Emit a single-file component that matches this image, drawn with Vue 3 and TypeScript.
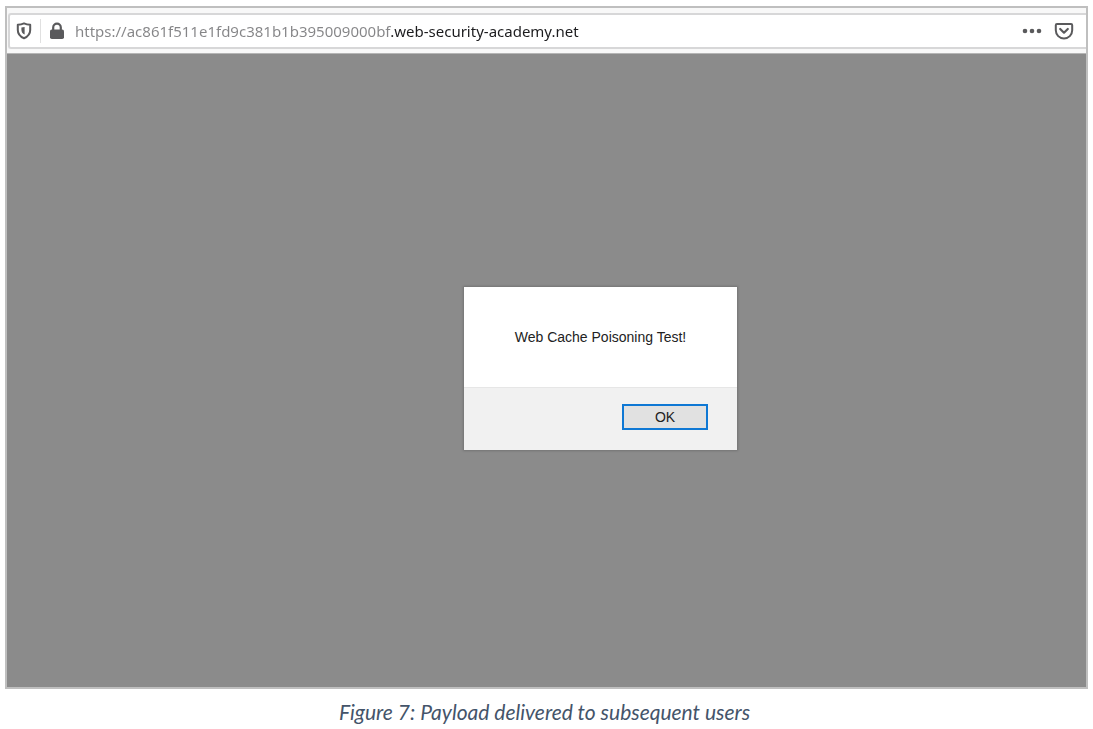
<script setup lang="ts">
import { ref } from 'vue'

const address = ref('https://ac861f511e1fd9c381b1b395009000bf.web-security-academy.net')
const message = 'Web Cache Poisoning Test!'
const open = ref(true)
</script>

<template>
  <figure class="figure">
    <div class="browser">
      <header class="toolbar">
        <div class="urlbar">
          <button class="icon shield" type="button" aria-label="Tracking protection">
            <svg width="16" height="18" viewBox="0 0 16 18">
              <path d="M8 1.4C10 2.300 12 2.700 14.200 2.800V8c0 4-2.400 6.700-6.200 8.200C4.200 14.700 1.800 12 1.800 8V2.800C4 2.700 6 2.300 8 1.400Z" fill="none" stroke="#5a5a5c" stroke-width="2" stroke-linejoin="round" />
              <path d="M8.600 4.900v7.600C6.500 11.700 5.400 9.900 5.400 7.700V5.400Z" fill="#5a5a5c" />
            </svg>
          </button>
          <span class="divider"></span>
          <button class="icon lock" type="button" aria-label="Connection secure">
            <svg width="16" height="18" viewBox="0 0 16 18">
              <path d="M4.200 9V5.400a3.800 3.800 0 0 1 7.600 0V9" fill="none" stroke="#5a5a5c" stroke-width="2.200" />
              <rect x="1" y="7.500" width="14" height="9.500" rx="1.800" fill="#5a5a5c" />
            </svg>
          </button>
          <input v-model="address" class="address" type="text" aria-label="Address" spellcheck="false" />
          <button class="icon more" type="button" aria-label="Page actions">
            <svg width="20" height="18" viewBox="0 0 20 18" fill="#5a5a5c">
              <circle cx="3" cy="9" r="2.300" />
              <circle cx="10" cy="9" r="2.300" />
              <circle cx="17" cy="9" r="2.300" />
            </svg>
          </button>
          <button class="icon pocket" type="button" aria-label="Save to Pocket">
            <svg width="20" height="18" viewBox="0 0 20 18" fill="none" stroke="#5a5a5c" stroke-width="2" stroke-linecap="round" stroke-linejoin="round">
              <path d="M3 2h14a1.200 1.200 0 0 1 1.200 1.200V8.300a8.200 8.200 0 0 1-16.400 0V3.200A1.200 1.200 0 0 1 3 2Z" />
              <path d="m6.200 7 3.800 3.700L13.800 7" stroke-width="2.200" />
            </svg>
          </button>
        </div>
      </header>
      <main class="page">
        <section v-if="open" class="dialog" role="alertdialog" aria-labelledby="message">
          <p id="message" class="message">{{ message }}</p>
          <div class="actions">
            <button class="ok" type="button" @click="open = false">OK</button>
          </div>
        </section>
      </main>
    </div>
    <figcaption class="caption">Figure 7: Payload delivered to subsequent users</figcaption>
  </figure>
</template>

<style>
body {
  background: #fff;
}
</style>

<style scoped>
.figure {
  box-sizing: border-box;
  display: flex;
  flex-direction: column;
  min-height: 100vh;
  margin: 0;
  padding: 6px 5px 4px;
}
.browser {
  flex: 1;
  display: flex;
  flex-direction: column;
  border: 2px solid #bfbfbf;
}
.toolbar {
  padding: 5px 0 4px 1px;
  background: #f8f8f8;
  border-bottom: 1px solid #b5b5b5;
}
.urlbar {
  display: flex;
  align-items: center;
  height: 32px;
  border: 2px solid #d7d7d8;
  border-right: 0;
  border-radius: 3px 0 0 3px;
  background: #fff;
}
.icon {
  display: flex;
  flex: none;
  margin: 0;
  padding: 0;
  border: 0;
  background: none;
}
.shield {
  margin-left: 6px;
}
.divider {
  width: 1px;
  height: 24px;
  margin: 0 8px;
  background: #e0e0e0;
}
.address {
  flex: 1;
  min-width: 0;
  height: 24px;
  margin: 0 12px 0 10px;
  padding: 0;
  border: 0;
  outline: 0;
  font: 15px/24px "Noto Sans", sans-serif;
  color: transparent;
  caret-color: #1c1c1e;
  background: linear-gradient(to right, #858587 316px, #1c1c1e 316px) text;
}
.more {
  margin-right: 12px;
}
.pocket {
  margin-right: 12px;
}
.page {
  flex: 1;
  display: flex;
  align-items: center;
  justify-content: center;
  padding: 0 0 5px 108px;
  background: #8b8b8b;
}
.dialog {
  width: 273px;
  background: #fff;
  box-shadow: 0 0 2px 1px rgba(0, 0, 0, 0.16);
  font-family: "Liberation Sans", Arial, sans-serif;
  color: #222;
}
.message {
  margin: 0;
  padding: 40px 16px;
  font-size: 14px;
  line-height: 20px;
  text-align: center;
}
.actions {
  display: flex;
  justify-content: flex-end;
  padding: 16px 29px 20px;
  border-top: 1px solid #e6e6e6;
  background: #f1f1f1;
}
.ok {
  width: 86px;
  height: 26px;
  padding: 0;
  border: 2px solid #0f78d4;
  background: #e1e1e1;
  color: #222;
  font: 14px/20px "Liberation Sans", Arial, sans-serif;
}
.caption {
  padding-top: 10px;
  padding-right: 4px;
  color: #44546a;
  font: italic 21px/26px Lato, sans-serif;
  text-align: center;
}
</style>
